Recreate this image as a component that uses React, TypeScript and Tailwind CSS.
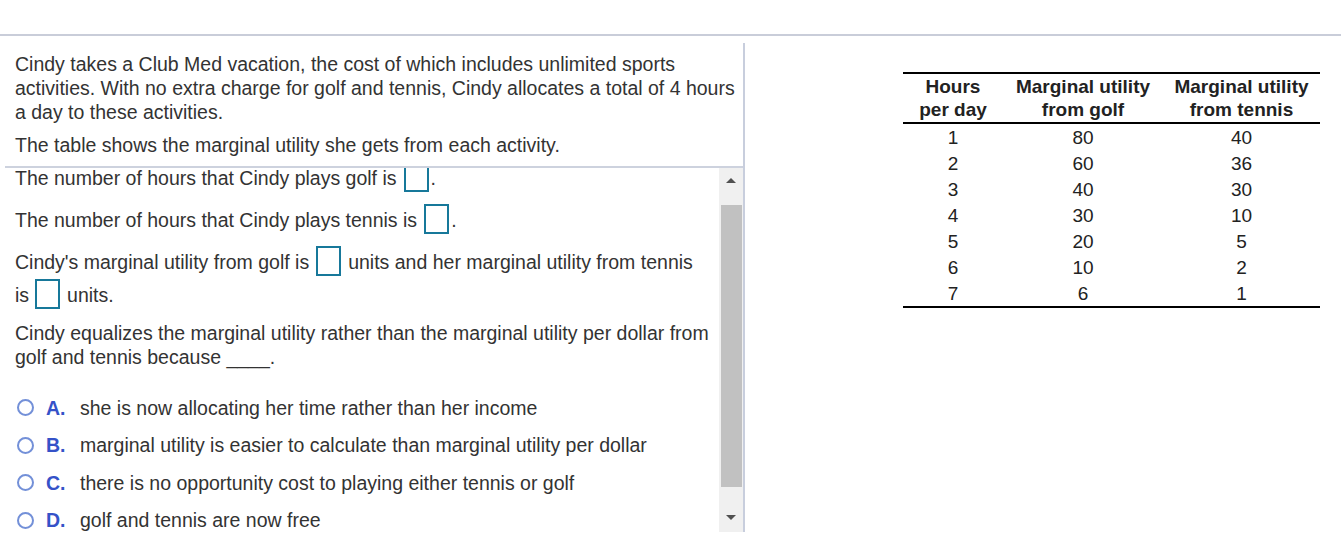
// Club Med marginal utility question – left scrolling question panel, right data table

const TABLE_ROWS: [number, number, number][] = [
  [1, 80, 40],
  [2, 60, 36],
  [3, 40, 30],
  [4, 30, 10],
  [5, 20, 5],
  [6, 10, 2],
  [7, 6, 1],
];

const OPTIONS = [
  { key: 'A', text: 'she is now allocating her time rather than her income' },
  { key: 'B', text: 'marginal utility is easier to calculate than marginal utility per dollar' },
  { key: 'C', text: 'there is no opportunity cost to playing either tennis or golf' },
  { key: 'D', text: 'golf and tennis are now free' },
];

function AnswerBox() {
  return <span className="inline-block w-[25px] h-[30px] border-2 border-[#17789a] shrink-0" />;
}

function Scrollbar() {
  return (
    <div className="w-[24px] h-full bg-[#f0f0f0] flex flex-col shrink-0">
      {/* up arrow */}
      <div className="h-[37px] flex justify-center pt-[10px]">
        <div className="w-0 h-0 border-l-[5px] border-r-[5px] border-b-[5px] border-l-transparent border-r-transparent border-b-[#505050]" />
      </div>
      {/* thumb */}
      <div className="h-[282px] pl-[2px] pr-[1px]">
        <div className="h-full bg-[#c1c1c1]" />
      </div>
      {/* down arrow */}
      <div className="flex-1 flex justify-center pt-[28px]">
        <div className="w-0 h-0 border-l-[5px] border-r-[5px] border-t-[5px] border-l-transparent border-r-transparent border-t-[#505050]" />
      </div>
    </div>
  );
}

export default function App() {
  return (
    <div className="w-[1341px] h-[542px] bg-white overflow-hidden font-['Liberation_Sans',Arial,sans-serif] text-[19.5px] text-[#333]">
      <div className="h-[34px]" />
      <div className="h-[2px] bg-[#c9cdd9]" />

      <div className="flex">
        {/* Question panel */}
        <div className="mt-[7px] ml-[5px] w-[740px] h-[489px] border-r-2 border-[#c8cedd] flex flex-col">
          <div className="pl-[10px] pt-[9px] pb-[9px] leading-[24px]">
            <p>
              Cindy takes a Club Med vacation, the cost of which includes unlimited sports
              <br />
              activities. With no extra charge for golf and tennis, Cindy allocates a total of 4 hours
              <br />
              a day to these activities.
            </p>
            <p className="mt-[9px]">The table shows the marginal utility she gets from each activity.</p>
          </div>

          <div className="h-[2px] bg-[#cdd2de]" />

          <div className="flex-1 flex overflow-hidden">
            <div className="flex-1 pl-[10px] overflow-hidden leading-[20px]">
              <div className="mt-[-5px]">
                <div className="h-[30px] flex items-center">
                  <span>The number of hours that Cindy plays golf is</span>
                  <span className="ml-[7px]">
                    <AnswerBox />
                  </span>
                  <span className="ml-[2px]">.</span>
                </div>

                <div className="h-[30px] mt-[12px] flex items-center">
                  <span>The number of hours that Cindy plays tennis is</span>
                  <span className="ml-[7px]">
                    <AnswerBox />
                  </span>
                  <span className="ml-[2px]">.</span>
                </div>

                <div className="mt-[12px]">
                  <div className="h-[30px] flex items-center">
                    <span>Cindy's marginal utility from golf is</span>
                    <span className="ml-[7px] mr-[7px]">
                      <AnswerBox />
                    </span>
                    <span>units and her marginal utility from tennis</span>
                  </div>
                  <div className="h-[30px] mt-[3px] flex items-center">
                    <span>is</span>
                    <span className="ml-[6px] mr-[7px]">
                      <AnswerBox />
                    </span>
                    <span>units.</span>
                  </div>
                </div>

                <p className="mt-[11px] leading-[24px]">
                  Cindy equalizes the marginal utility rather than the marginal utility per dollar from
                  <br />
                  golf and tennis because ____.
                </p>

                <div className="mt-[20px]">
                  {OPTIONS.map((opt) => (
                    <div key={opt.key} className="h-[37.5px] flex items-center">
                      <span className="ml-[2px] w-[17px] h-[17px] rounded-full border-2 border-[#7390d8] shrink-0" />
                      <span className="ml-[12px] w-[34px] font-bold text-[#3552c8]">{opt.key}.</span>
                      <span>{opt.text}</span>
                    </div>
                  ))}
                </div>
              </div>
            </div>
            <Scrollbar />
          </div>
        </div>

        {/* Data table */}
        <div className="ml-[158px] mt-[36px] text-[19px] text-[#222]">
          <div className="w-[417px] border-t-2 border-b-2 border-black">
            <div className="grid grid-cols-[100px_160px_157px] font-bold leading-[23px] py-[1px] border-b-2 border-black">
              <div className="text-center">
                Hours
                <br />
                per day
              </div>
              <div className="text-center">
                Marginal utility
                <br />
                from golf
              </div>
              <div className="text-center">
                Marginal utility
                <br />
                from tennis
              </div>
            </div>
            {TABLE_ROWS.map(([hours, golf, tennis]) => (
              <div key={hours} className="grid grid-cols-[100px_160px_157px] h-[26px] items-center">
                <div className="text-center">{hours}</div>
                <div className="text-center">{golf}</div>
                <div className="text-center">{tennis}</div>
              </div>
            ))}
          </div>
        </div>
      </div>
    </div>
  );
}
